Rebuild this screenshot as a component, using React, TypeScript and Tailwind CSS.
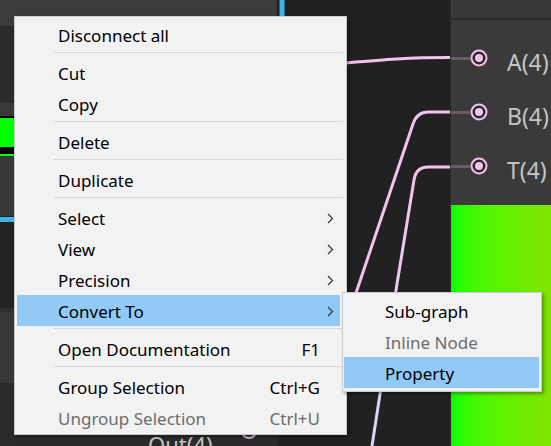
import React from 'react';

type Item =
  | { sep: true }
  | { sep?: false; label: string; shortcut?: string; sub?: boolean; active?: boolean; disabled?: boolean };

const mainItems: Item[] = [
  { label: 'Disconnect all' },
  { sep: true },
  { label: 'Cut' },
  { label: 'Copy' },
  { sep: true },
  { label: 'Delete' },
  { sep: true },
  { label: 'Duplicate' },
  { sep: true },
  { label: 'Select', sub: true },
  { label: 'View', sub: true },
  { label: 'Precision', sub: true },
  { label: 'Convert To', sub: true, active: true },
  { sep: true },
  { label: 'Open Documentation', shortcut: 'F1' },
  { sep: true },
  { label: 'Group Selection', shortcut: 'Ctrl+G' },
  { label: 'Ungroup Selection', shortcut: 'Ctrl+U', disabled: true },
];

const subItems: Item[] = [
  { label: 'Sub-graph' },
  { label: 'Inline Node', disabled: true },
  { label: 'Property', active: true },
];

function Chevron() {
  return (
    <svg width="7" height="11" viewBox="0 0 7 11" className="text-[#333]">
      <polyline points="1,1 5.5,5.5 1,10" fill="none" stroke="currentColor" strokeWidth="1.2" />
    </svg>
  );
}

function MenuRow({ item, chevronCol }: { item: Item; chevronCol: boolean }) {
  if (item.sep) {
    return (
      <div className="pt-[2px] pb-[4px] ml-[37px] mr-[-3px]">
        <div className="h-px bg-[#d7d7d7]" />
      </div>
    );
  }
  return (
    <div
      className={`flex h-[31px] items-center pl-[41px] pt-[2px] ${item.active ? 'bg-[#91c9f7]' : ''} ${
        item.disabled ? 'text-[#6d6d6d]' : 'text-black'
      }`}
    >
      <span className="flex-1 whitespace-nowrap">{item.label}</span>
      {item.shortcut && <span className="whitespace-nowrap">{item.shortcut}</span>}
      {chevronCol && (
        <span className="flex w-[20px] justify-end pr-[6px]">{item.sub && <Chevron />}</span>
      )}
    </div>
  );
}

function Port({ label }: { label: string }) {
  return (
    <div className="flex h-[54px] items-center">
      <div className="h-[3px] w-[19px] bg-[#685c66]" />
      <svg width="18" height="18" viewBox="0 0 18 18">
        <circle cx="9" cy="9" r="7.5" fill="#2a2a2a" stroke="#f4c2ec" strokeWidth="2" />
        <circle cx="9" cy="9" r="4" fill="#f4c2ec" />
      </svg>
      <span className="ml-[19px] mt-[9px] text-[23px] text-[#c4c4c4]">{label}</span>
    </div>
  );
}

export default function App() {
  return (
    <div className="relative h-[446px] w-[551px] overflow-hidden bg-[#212121] font-['Noto_Sans',sans-serif]">
      {/* left node stack */}
      <div className="absolute left-0 top-0 flex h-full w-[277px] flex-col">
        <div className="h-[26px] bg-[#3b3b3b]" />
        <div className="h-[77px] bg-[#2b2b2b]" />
        <div className="h-[13px] bg-[#3a3a3a]" />
        <div className="h-[2px] bg-black" />
        <div className="h-[29px] bg-[#00ff00]" />
        <div className="h-[7px] bg-black" />
        <div className="h-[2px] bg-[#00ff00]" />
        <div className="h-[60px] bg-[#383838]" />
        <div className="h-[1px] bg-[#222]" />
        <div className="h-[5px] bg-[#3cb4f0]" />
        <div className="h-[86px] bg-[#222222]" />
        <div className="h-[4px] bg-[#2e2e2e]" />
        <div className="h-[71px] bg-[#373737]" />
        <div className="flex flex-1 items-end bg-[#2a2a2a] pl-[148px]">
          <span className="mb-[-9px] text-[22px] leading-none text-[#c4c4c4]">Out(4)</span>
        </div>
      </div>

      {/* right node */}
      <div className="absolute left-[450px] top-0 flex h-full w-[101px] flex-col border-l border-[#2a2a2a]">
        <div className="h-[18px] bg-[#383838]" />
        <div className="h-[2px] bg-[#2a2a2a]" />
        <div className="flex h-[185px] flex-col bg-[#3a3a3a] pt-[11px]">
          <Port label="A(4)" />
          <Port label="B(4)" />
          <Port label="T(4)" />
        </div>
        <div className="flex-1 bg-gradient-to-r from-[#00ff00] to-[#7fe400]" />
      </div>

      {/* wires */}
      <svg className="absolute left-0 top-0" width="551" height="446" viewBox="0 0 551 446">
        <defs>
          <linearGradient id="tw" x1="0" y1="167" x2="0" y2="446" gradientUnits="userSpaceOnUse">
            <stop offset="0" stopColor="#f4c2ec" />
            <stop offset="1" stopColor="#ddd4f4" />
          </linearGradient>
        </defs>
        <line x1="282" y1="0" x2="282" y2="40" stroke="#3cb4f0" strokeWidth="5" />
        <path d="M340,63.5 C380,60 405,57.5 450,57.5" fill="none" stroke="#f4c2ec" strokeWidth="3" />
        <path d="M450,112 L428,112 Q417,112 413,124 L357,290 L315,420" fill="none" stroke="#f4c2ec" strokeWidth="3" />
        <path d="M450,167 L428,167 Q416,167 414,180 L397,284 L372,446" fill="none" stroke="url(#tw)" strokeWidth="3" />
        <circle cx="249" cy="431" r="7" fill="#2a2a2a" stroke="#dcb4e4" strokeWidth="2" />
      </svg>

      {/* main context menu */}
      <div className="absolute left-[14px] top-[16px] w-[333px] border border-[#cccccc] bg-[#f2f2f2] pb-[1px] pl-[2px] pr-[6px] pt-[2px] text-[17px] shadow-[2px_2px_3px_rgba(0,0,0,0.35)]">
        {mainItems.map((item, i) => (
          <MenuRow key={i} item={item} chevronCol />
        ))}
      </div>

      {/* submenu */}
      <div className="absolute left-[342px] top-[292px] w-[200px] border border-[#cccccc] bg-[#f2f2f2] pb-[3px] pl-[1px] pr-[2px] pt-[2px] text-[17px] shadow-[2px_2px_3px_rgba(0,0,0,0.35)]">
        {subItems.map((item, i) => (
          <MenuRow key={i} item={item} chevronCol={false} />
        ))}
      </div>
    </div>
  );
}
